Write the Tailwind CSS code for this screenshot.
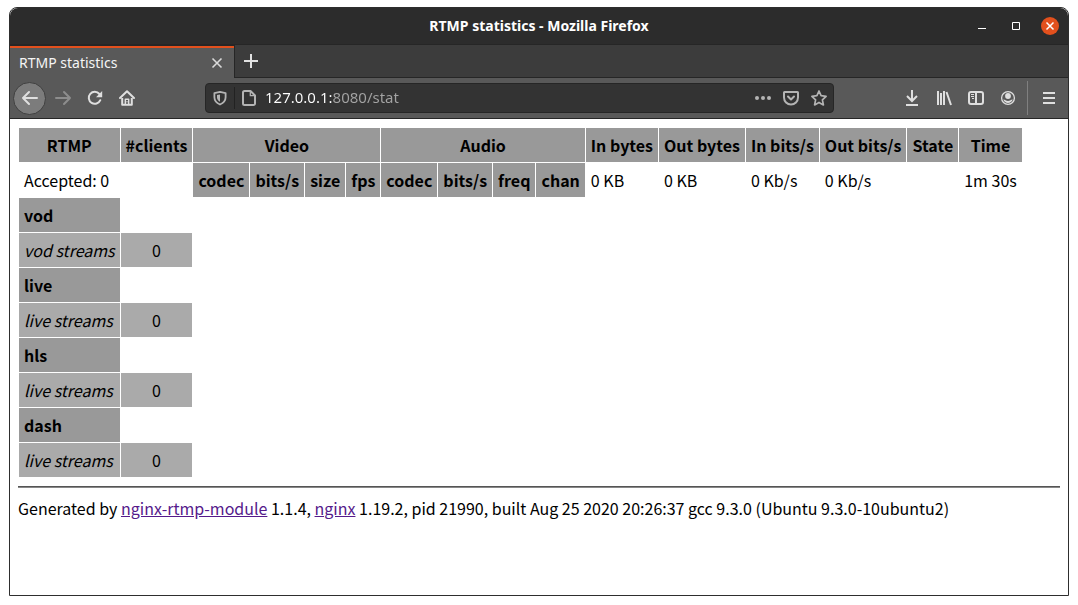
<!DOCTYPE html>
<html lang="en">
<head>
    <meta charset="UTF-8">
    <meta name="viewport" content="width=device-width, initial-scale=1.0">
    <title>RTMP statistics</title>
    <script src="https://cdn.jsdelivr.net/npm/@tailwindcss/browser@4"></script>
</head>
<body class="flex flex-col min-h-screen bg-white px-[9px] pt-[7px] pb-[9px] font-['Noto_Sans',sans-serif] text-sm">

    <div class="flex-1 flex flex-col border border-[#2e2e2e] rounded-t-lg">

        <!-- Title bar -->
        <header class="grid grid-cols-[1fr_auto_1fr] items-center h-9 bg-[#2c2c2c] rounded-t-lg text-white">
            <h1 class="col-start-2 font-bold text-sm">RTMP statistics - Mozilla Firefox</h1>
            <div class="flex items-center justify-end gap-4 pr-[9px]">
                <button type="button" aria-label="Minimize" class="w-[18px] h-[18px]">
                    <svg class="w-[18px] h-[18px]" viewBox="0 0 18 18" fill="#fff"><path d="M5 11h8v1H5z"/></svg>
                </button>
                <button type="button" aria-label="Maximize" class="w-[18px] h-[18px]">
                    <svg class="w-[18px] h-[18px]" viewBox="0 0 18 18" fill="none" stroke="#fff"><path d="M5.5 5.5h7v7h-7z"/></svg>
                </button>
                <button type="button" aria-label="Close window" class="w-[18px] h-[18px] rounded-full bg-[#e2501d]">
                    <svg class="w-[18px] h-[18px]" viewBox="0 0 18 18" fill="none" stroke="#fff" stroke-width="1.5"><path d="M5.5 5.5l7 7M12.5 5.5l-7 7"/></svg>
                </button>
            </div>
        </header>

        <!-- Tabs -->
        <div class="flex h-[34px] bg-[#3c3c3c] border-t border-[#262626]">
            <div class="w-56 pt-px bg-[#262626]">
                <div class="flex items-center justify-between h-8 border-t-2 border-[#e2501d] bg-[#595959] px-[9px] text-[#f5f5f5]">
                    <span>RTMP statistics</span>
                    <button type="button" aria-label="Close tab" class="w-4 h-4">
                        <svg class="w-4 h-4" viewBox="0 0 16 16" fill="none" stroke="#dadada" stroke-width="1.6"><path d="M3.5 3.5l9 9M12.5 3.5l-9 9"/></svg>
                    </button>
                </div>
            </div>
            <div class="flex-1 flex items-center border-l border-b border-[#262626] pl-2">
                <button type="button" aria-label="New tab" class="w-4 h-4">
                    <svg class="w-4 h-4" viewBox="0 0 16 16" fill="none" stroke="#e2e2e2" stroke-width="2"><path d="M1 8h14M8 1v14"/></svg>
                </button>
            </div>
        </div>

        <!-- Navigation toolbar -->
        <nav class="flex items-center h-[41px] bg-[#595959] border-b border-[#262626] pl-[3px] pr-[11px] text-[#dfdfdf]">
            <button type="button" aria-label="Back" class="flex items-center justify-center w-[33px] h-[33px] rounded-full border border-[#404040] bg-[#7c7c7c]">
                <svg class="w-[18px] h-4" viewBox="0 0 18 16" fill="none" stroke="currentColor" stroke-width="2" stroke-linecap="round" stroke-linejoin="round"><path d="M2 8h14M8 2L2 8l6 6"/></svg>
            </button>
            <button type="button" disabled aria-label="Forward" class="ml-2 text-[#8d8d8d]">
                <svg class="w-[18px] h-4" viewBox="0 0 18 16" fill="none" stroke="currentColor" stroke-width="2" stroke-linecap="round" stroke-linejoin="round"><path d="M2 8h14M10 2l6 6-6 6"/></svg>
            </button>
            <button type="button" aria-label="Reload" class="ml-[15px]">
                <svg class="w-4 h-4" viewBox="0 0 16 16" fill="none" stroke="currentColor" stroke-width="2"><path d="M13.3 10.2A6 6 0 1 1 12.4 4" stroke-linecap="round"/><path d="M15.2 1v6.2H9z" fill="currentColor" stroke="none"/></svg>
            </button>
            <button type="button" aria-label="Home" class="ml-4">
                <svg class="w-4 h-4" viewBox="0 0 16 16" fill="none" stroke="currentColor" stroke-width="2" stroke-linejoin="round"><path d="M1 8l7-6.8L15 8" stroke-linecap="round"/><path d="M3.2 8v6.8h9.6V8"/><path d="M6.3 14.5V9.3h3.4v5.2" stroke-width="1.4"/><path d="M8 11v1.5" stroke-width="1"/></svg>
            </button>

            <div class="flex items-center h-[30px] w-[629px] ml-[70px] rounded border border-[#262626] bg-[#333] px-1.5 text-[#b4b4b4]">
                <button type="button" aria-label="Tracking protection">
                    <svg class="w-4 h-4" viewBox="0 0 16 16" fill="none" stroke="currentColor"><path d="M8 1.8l5.6 1.3v4.2c0 3.8-2.8 6-5.6 7.2-2.8-1.2-5.6-3.4-5.6-7.2V3.1z" stroke-width="1.8" stroke-linejoin="round"/><path d="M8 4.400v7.400C6 10.600 5 9.200 5 7.200V5.100z" fill="currentColor" stroke="none"/></svg>
                </button>
                <span class="w-px h-[22px] bg-[#222] ml-1.5"></span>
                <button type="button" aria-label="Site information" class="ml-1.5">
                    <svg class="w-4 h-4" viewBox="0 0 16 16" fill="none" stroke="currentColor" stroke-width="2" stroke-linejoin="round"><path d="M3.5 1H9.5l4.500 4.500V13.500a1.500 1.500 0 0 1-1.500 1.500H3.500A1.500 1.500 0 0 1 2 13.500V2.500A1.500 1.500 0 0 1 3.500 1z"/><path d="M9.300 1.500v4.200h4.200" stroke-width="1.300"/></svg>
                </button>
                <!-- host is brighter than the port and path -->
                <input type="text" aria-label="Address" value="127.0.0.1:8080/stat" class="flex-1 min-w-0 ml-2 text-[15px] outline-none text-transparent caret-white bg-clip-text bg-[linear-gradient(to_right,#fff_67px,#a4a4a4_67px)]">
                <div class="flex items-center gap-3">
                    <button type="button" aria-label="Page actions">
                        <svg class="w-4 h-4" viewBox="0 0 16 16" fill="currentColor"><circle cx="2" cy="8" r="2"/><circle cx="8" cy="8" r="2"/><circle cx="14" cy="8" r="2"/></svg>
                    </button>
                    <button type="button" aria-label="Save to Pocket">
                        <svg class="w-4 h-4" viewBox="0 0 16 16" fill="none" stroke="currentColor" stroke-width="2" stroke-linecap="round" stroke-linejoin="round"><path d="M1.500 2h13c.3 0 .5.2.5.5V7.500a7 7 0 0 1-14 0V2.500c0-.3.2-.5.5-.5z"/><path d="M5 6.500l3 3 3-3"/></svg>
                    </button>
                    <button type="button" aria-label="Bookmark this page">
                        <svg class="w-4 h-4" viewBox="0 0 16 16" fill="none" stroke="currentColor" stroke-width="1.700" stroke-linejoin="round"><path d="M8 1l2.100 4.700 5 .6-3.700 3.500 1 5.100L8 12.400l-4.400 2.500 1-5.100L.9 6.300l5-.6z"/></svg>
                    </button>
                </div>
            </div>

            <div class="flex items-center gap-4 ml-auto">
                <button type="button" aria-label="Downloads">
                    <svg class="w-4 h-4" viewBox="0 0 16 16" fill="none" stroke="currentColor" stroke-width="2"><path d="M8 0v11M3 6l5 5 5-5"/><path d="M2 15h12"/></svg>
                </button>
                <button type="button" aria-label="Library">
                    <svg class="w-4 h-4" viewBox="0 0 16 16" fill="none" stroke="currentColor" stroke-width="2"><path d="M2 1v14M5 3v12M8 1v14M10.500 2l4.500 13"/></svg>
                </button>
                <button type="button" aria-label="Sidebars">
                    <svg class="w-4 h-4" viewBox="0 0 16 16" fill="none" stroke="currentColor" stroke-width="2"><rect x="1" y="2" width="14" height="12" rx="2"/><path d="M8 2v12"/><path d="M3 4.500h3M3 6.500h3M4 8.500h2" stroke-width="1"/></svg>
                </button>
                <button type="button" aria-label="Account">
                    <svg class="w-4 h-4" viewBox="0 0 16 16" fill="currentColor"><circle cx="8" cy="8" r="6.400" fill="none" stroke="currentColor" stroke-width="1.300"/><circle cx="8" cy="6" r="2.900"/><path d="M3.300 9.500c1 0 1.500.2 2.200.7 1.400 1 3.600 1 5 0 .7-.5 1.200-.7 2.200-.7-.7 2.200-2.500 3.500-4.700 3.500S4 11.700 3.300 9.500z"/></svg>
                </button>
            </div>
            <span class="w-px h-[34px] bg-[#808080] ml-[11px] mr-[13px]"></span>
            <button type="button" aria-label="Menu">
                <svg class="w-4 h-4" viewBox="0 0 16 16" fill="none" stroke="currentColor" stroke-width="2"><path d="M2 3h12M2 8h12M2 13h12"/></svg>
            </button>
        </nav>

        <!-- Page -->
        <main class="flex-1 bg-white p-2 font-['Noto_Sans_CJK_SC',sans-serif] text-base text-black">
            <table class="border-separate border-spacing-px leading-6 whitespace-nowrap [&_th]:p-[5px] [&_td]:p-[5px] [&_th]:bg-[#999]">
                <tr>
                    <th>RTMP</th>
                    <th>#clients</th>
                    <th colspan="4">Video</th>
                    <th colspan="4">Audio</th>
                    <th>In bytes</th>
                    <th>Out bytes</th>
                    <th>In bits/s</th>
                    <th>Out bits/s</th>
                    <th>State</th>
                    <th>Time</th>
                </tr>
                <tr>
                    <td colspan="2">Accepted: 0</td>
                    <th>codec</th>
                    <th>bits/s</th>
                    <th>size</th>
                    <th>fps</th>
                    <th>codec</th>
                    <th>bits/s</th>
                    <th>freq</th>
                    <th>chan</th>
                    <td>0 KB</td>
                    <td>0 KB</td>
                    <td>0 Kb/s</td>
                    <td>0 Kb/s</td>
                    <td></td>
                    <td>1m 30s</td>
                </tr>
                <tr>
                    <th class="text-left">vod</th>
                </tr>
                <tr class="bg-[#aaa] text-center">
                    <td class="text-left italic">vod streams</td>
                    <td>0</td>
                </tr>
                <tr>
                    <th class="text-left">live</th>
                </tr>
                <tr class="bg-[#aaa] text-center">
                    <td class="text-left italic">live streams</td>
                    <td>0</td>
                </tr>
                <tr>
                    <th class="text-left">hls</th>
                </tr>
                <tr class="bg-[#aaa] text-center">
                    <td class="text-left italic">live streams</td>
                    <td>0</td>
                </tr>
                <tr>
                    <th class="text-left">dash</th>
                </tr>
                <tr class="bg-[#aaa] text-center">
                    <td class="text-left italic">live streams</td>
                    <td>0</td>
                </tr>
            </table>
            <hr class="my-2 border-t border-b border-t-[#555] border-b-[#888]">
            <p>
                Generated by <a href="https://github.com/arut/nginx-rtmp-module" class="text-[#551a8b] underline">nginx-rtmp-module</a> 1.1.4,
                <a href="http://nginx.org" class="text-[#551a8b] underline">nginx</a> 1.19.2, pid 21990, built Aug 25 2020 20:26:37 gcc 9.3.0 (Ubuntu 9.3.0-10ubuntu2)
            </p>
        </main>
    </div>

</body>
</html>
